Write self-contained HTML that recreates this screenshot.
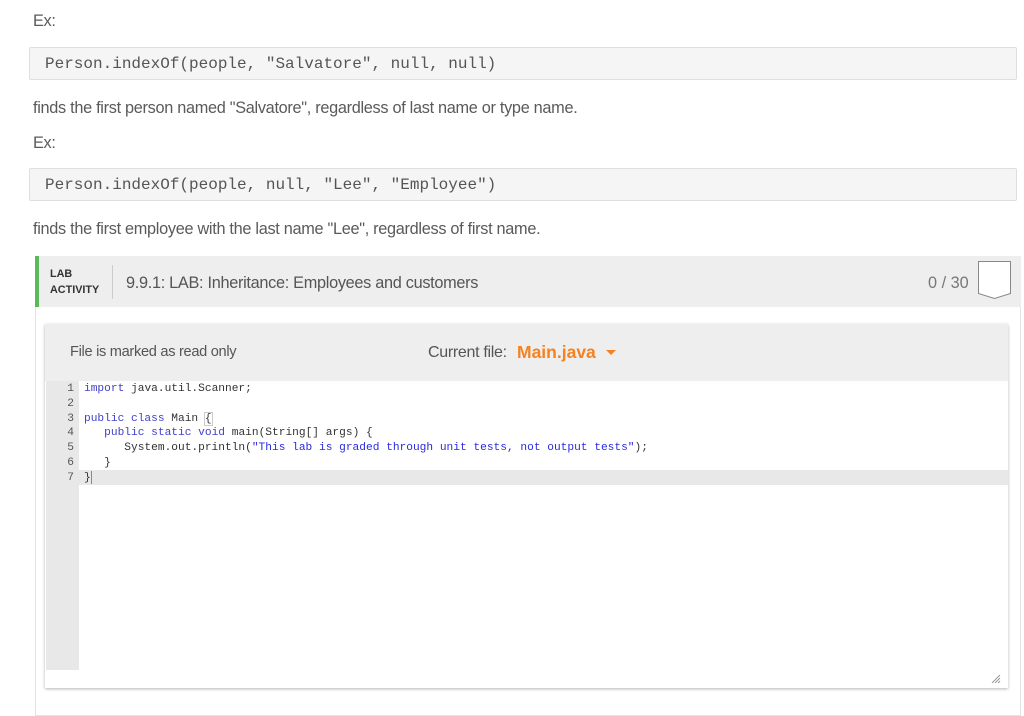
<!DOCTYPE html>
<html><head><style>
body{margin:0;background:#fff;font-family:"Liberation Sans",sans-serif;color:#555;width:1024px;height:703px;overflow:hidden;position:relative}
.a{position:absolute}
.t{font-size:16.3px;color:#5a5a5a;letter-spacing:-0.3px}
.pre{position:absolute;left:29px;width:988px;background:#f5f5f5;border:1px solid #dedede;border-radius:2px;font-family:"Liberation Mono",monospace;font-size:16px;color:#555;line-height:33px;text-indent:15px;box-sizing:border-box;height:33px}
.code{font-family:"Liberation Mono",monospace;font-size:11.2px;line-height:14.8px;color:#333;white-space:pre}
.k{color:#4141c8}.s{color:#2a2ae0}
</style></head><body>
<div class="a t" style="left:33px;top:12px">Ex:</div>
<div class="pre" style="top:47px">Person.indexOf(people, "Salvatore", null, null)</div>
<div class="a t" style="left:33px;top:99px">finds the first person named "Salvatore", regardless of last name or type name.</div>
<div class="a t" style="left:33px;top:134px">Ex:</div>
<div class="pre" style="top:168px">Person.indexOf(people, null, "Lee", "Employee")</div>
<div class="a t" style="left:33px;top:220px">finds the first employee with the last name "Lee", regardless of first name.</div>

<div class="a" style="left:35px;top:256px;width:986px;height:460px;border:1px solid #e4e4e4;box-sizing:border-box;background:#fff"></div>
<div class="a" style="left:35px;top:256px;width:986px;height:51px;background:#eee"></div>
<div class="a" style="left:35px;top:256px;width:4px;height:51px;background:#5cb85c"></div>
<div class="a" style="left:50px;top:266px;font-size:10.8px;font-weight:bold;color:#333;line-height:16px">LAB<br>ACTIVITY</div>
<div class="a" style="left:112px;top:265px;width:1px;height:34px;background:#ccc"></div>
<div class="a" style="left:126px;top:274px;font-size:16.3px;color:#555;letter-spacing:-0.3px">9.9.1: LAB: Inheritance: Employees and customers</div>
<div class="a" style="left:928px;top:274px;font-size:16.3px;color:#777">0 / 30</div>
<svg class="a" style="left:977px;top:260px" width="36" height="40"><path d="M1.5 1.5H33.5V33.5L17.5 38.5L1.5 33.5Z" fill="#fff" stroke="#888" stroke-width="1"/></svg>

<div class="a" style="left:45px;top:324px;width:963px;height:364px;background:#fff;box-shadow:0 1px 3px rgba(0,0,0,.3)"></div>
<div class="a" style="left:45px;top:324px;width:963px;height:57px;background:#eee"></div>
<div class="a" style="left:70px;top:344px;font-size:14.6px;color:#555;letter-spacing:-0.3px">File is marked as read only</div>
<div class="a" style="left:428px;top:344px;font-size:16px;color:#555;letter-spacing:-0.3px">Current file:</div>
<div class="a" style="left:517px;top:342px;font-size:17.5px;font-weight:bold;color:#f5821f">Main.java</div>
<svg class="a" style="left:605px;top:349px" width="12" height="8"><path d="M1 1H11L6 6Z" fill="#f5821f"/></svg>
<div class="a" style="left:46px;top:381px;width:33px;height:289px;background:#e8e8e8"></div>
<div class="a" style="left:46px;top:470px;width:962px;height:15px;background:#e8e8e8"></div>
<div class="a code" style="left:46px;top:382px;width:28px;text-align:right;color:#555">1
2
3
4
5
6
7</div>
<div class="a code" style="left:84px;top:382px"><span class="k">import</span> java.util.Scanner;

<span class="k">public class</span> Main <span style="outline:1px solid #ccc">{</span>
   <span class="k">public static void</span> main(String[] args) {
      System.out.println(<span class="s">"This lab is graded through unit tests, not output tests"</span>);
   }
}</div>
<div class="a" style="left:91px;top:471px;width:1px;height:13px;background:#888"></div>
<svg class="a" style="left:990px;top:673px" width="12" height="12"><path d="M10 2L2 10M10 5L5 10M10 8L8 10" stroke="#999" stroke-width="1"/></svg>
</body></html>
